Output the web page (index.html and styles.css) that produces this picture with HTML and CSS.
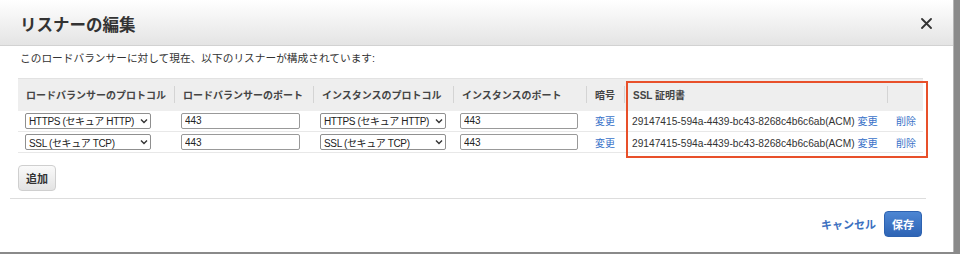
FILE: index.html
```html
<!DOCTYPE html>
<html lang="ja">
    <head>
        <meta charset="UTF-8" />
        <meta name="viewport" content="width=device-width, initial-scale=1.0" />
        <title>リスナーの編集</title>

        <link rel="stylesheet" href="styles.css">
    </head>
    <body>
        <div class="dialog">
            <header class="dialog-header">
                <h1>リスナーの編集</h1>
                <a class="close" title="閉じる">
                    <svg width="11" height="11" viewBox="0 0 11 11">
                        <path d="M1 1 L10 10 M10 1 L1 10" stroke="#333" stroke-width="1.8" stroke-linecap="round" />
                    </svg>
                </a>
            </header>

            <main class="dialog-body">
                <p class="intro">このロードバランサーに対して現在、以下のリスナーが構成されています:</p>

                <div class="listeners">
                    <table>
                        <colgroup>
                            <col style="width: 156px" />
                            <col style="width: 139px" />
                            <col style="width: 140px" />
                            <col style="width: 133px" />
                            <col style="width: 38px" />
                            <col style="width: 263px" />
                            <col style="width: 36px" />
                        </colgroup>
                        <thead>
                            <tr>
                                <th>ロードバランサーのプロトコル</th>
                                <th class="sep">ロードバランサーのポート</th>
                                <th class="sep">インスタンスのプロトコル</th>
                                <th class="sep">インスタンスのポート</th>
                                <th class="sep">暗号</th>
                                <th class="sep">SSL 証明書</th>
                                <th class="sep"></th>
                            </tr>
                        </thead>
                        <tbody>
                            <tr>
                                <td>
                                    <div class="select">
                                        <span>HTTPS (セキュア HTTP)</span>
                                        <svg width="8" height="6" viewBox="0 0 8 6"><path d="M1 1.5 L4 4.5 L7 1.5" fill="none" stroke="#333" stroke-width="1.4" /></svg>
                                    </div>
                                </td>
                                <td><input type="text" value="443" /></td>
                                <td>
                                    <div class="select">
                                        <span>HTTPS (セキュア HTTP)</span>
                                        <svg width="8" height="6" viewBox="0 0 8 6"><path d="M1 1.5 L4 4.5 L7 1.5" fill="none" stroke="#333" stroke-width="1.4" /></svg>
                                    </div>
                                </td>
                                <td><input type="text" value="443" class="narrow" /></td>
                                <td class="pad"><a class="link">変更</a></td>
                                <td class="cert">29147415-594a-4439-bc43-8268c4b6c6ab(ACM) <a class="link">変更</a></td>
                                <td class="pad"><a class="link">削除</a></td>
                            </tr>
                            <tr>
                                <td>
                                    <div class="select">
                                        <span>SSL (セキュア TCP)</span>
                                        <svg width="8" height="6" viewBox="0 0 8 6"><path d="M1 1.5 L4 4.5 L7 1.5" fill="none" stroke="#333" stroke-width="1.4" /></svg>
                                    </div>
                                </td>
                                <td><input type="text" value="443" /></td>
                                <td>
                                    <div class="select">
                                        <span>SSL (セキュア TCP)</span>
                                        <svg width="8" height="6" viewBox="0 0 8 6"><path d="M1 1.5 L4 4.5 L7 1.5" fill="none" stroke="#333" stroke-width="1.4" /></svg>
                                    </div>
                                </td>
                                <td><input type="text" value="443" class="narrow" /></td>
                                <td class="pad"><a class="link">変更</a></td>
                                <td class="cert">29147415-594a-4439-bc43-8268c4b6c6ab(ACM) <a class="link">変更</a></td>
                                <td class="pad"><a class="link">削除</a></td>
                            </tr>
                        </tbody>
                    </table>
                    <div class="highlight"></div>
                </div>

                <div class="actions">
                    <button class="btn">追加</button>
                </div>
            </main>

            <footer class="dialog-footer">
                <a class="cancel">キャンセル</a>
                <button class="btn btn-primary">保存</button>
            </footer>
        </div>
    </body>
</html>
```

FILE: styles.css
```css
* {
    font-family: "Liberation Sans", "Noto Sans CJK JP", sans-serif;
    box-sizing: border-box;
}
body {
    margin: 0;
    background: #8a8a8a;
}
.dialog {
    width: 954px;
    height: 252px;
    background: #fff;
    border-right: 1px solid #b5b5b5;
}
.dialog-header {
    height: 46px;
    padding: 2px 21px 0 20px;
    display: flex;
    align-items: center;
    justify-content: space-between;
    background: linear-gradient(#ffffff, #e4e4e4);
    border-bottom: 1px solid #d2d2d2;
}
.dialog-header h1 {
    margin: 0;
    font-size: 16.5px;
    font-weight: bold;
    color: #333;
}
.close {
    display: flex;
    cursor: pointer;
}
.intro {
    margin: 4px 0 0 20px;
    line-height: 16px;
    font-size: 10.7px;
    color: #333;
}
.listeners {
    position: relative;
    margin: 12px 0 0 18px;
    width: 905px;
}
table {
    width: 905px;
    table-layout: fixed;
    border-collapse: collapse;
    font-size: 10px;
    color: #333;
}
th {
    height: 32px;
    padding: 0 8px;
    text-align: left;
    font-size: 10px;
    font-weight: bold;
    color: #444;
    white-space: nowrap;
    background-color: #eeeeee;
    border-top: 1px solid #e2e2e2;
}
th.sep {
    padding-left: 9px;
    background-image: linear-gradient(#d4d4d4, #d4d4d4);
    background-size: 1px 17px;
    background-position: left center;
    background-repeat: no-repeat;
}
td {
    height: 21px;
    padding: 0 7px;
    white-space: nowrap;
    border-bottom: 1px solid #e8e8e8;
}
td.pad {
    padding-left: 9px;
}
td.cert {
    padding-left: 8px;
    font-size: 10.2px;
}
.select {
    width: 126px;
    height: 16px;
    padding: 0 2px 0 3px;
    display: flex;
    align-items: center;
    justify-content: space-between;
    border: 1px solid #8f8f8f;
    border-radius: 2px;
    font-size: 10px;
    letter-spacing: -0.35px;
    color: #222;
    background: #fff;
}
input {
    width: 119px;
    height: 16px;
    padding: 0 3px;
    border: 1px solid #999;
    border-radius: 2px;
    font-size: 10px;
    color: #222;
}
input.narrow {
    width: 118px;
}
.link {
    color: #3b73c9;
    cursor: pointer;
}
.highlight {
    position: absolute;
    left: 608px;
    top: 3px;
    width: 302px;
    height: 77px;
    border: 2px solid #e8502a;
}
.actions {
    margin: 12px 0 0 18px;
}
.btn {
    height: 26px;
    padding: 0 7px;
    font-size: 11px;
    font-weight: bold;
    color: #333;
    border: 1px solid #cfcfcf;
    border-radius: 4px;
    background: linear-gradient(#fafafa, #e3e3e3);
    cursor: pointer;
}
.dialog-footer {
    margin: 7px 27px 0 10px;
    padding: 12px 4px 0 0;
    display: flex;
    align-items: center;
    justify-content: flex-end;
    gap: 8px;
    border-top: 1px solid #dddddd;
}
.cancel {
    font-size: 11px;
    font-weight: bold;
    color: #3b6fc0;
    cursor: pointer;
}
.btn-primary {
    color: #fff;
    border-color: #2d62b0;
    background: linear-gradient(#4d86d3, #2e64b5);
}
```
